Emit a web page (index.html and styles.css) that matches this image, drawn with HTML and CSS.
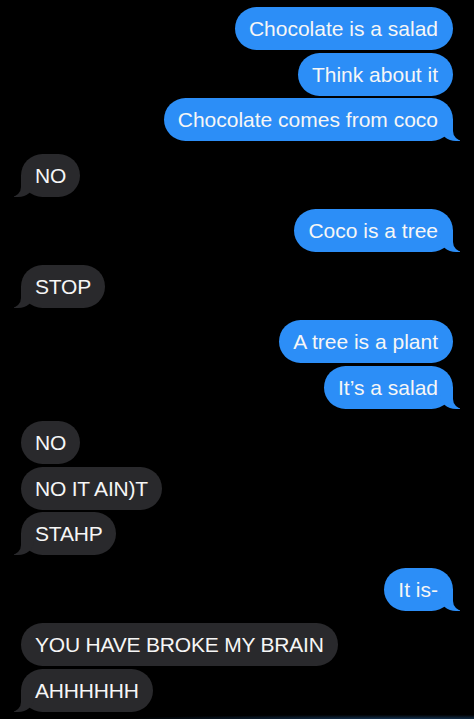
FILE: index.html
```
<!DOCTYPE html>
<html lang="en">
<head>
    <meta charset="UTF-8">
    <meta name="viewport" content="width=device-width, initial-scale=1.0">
    <title>Messages</title>
    <link rel="stylesheet" href="styles.css">
</head>
<body>
    <div class="thread">
        <div class="group">
            <div class="msg sent">Chocolate is a salad</div>
            <div class="msg sent">Think about it</div>
            <div class="msg sent tail">Chocolate comes from coco</div>
        </div>

        <div class="group">
            <div class="msg received tail">NO</div>
        </div>

        <div class="group">
            <div class="msg sent tail">Coco is a tree</div>
        </div>

        <div class="group">
            <div class="msg received tail">STOP</div>
        </div>

        <div class="group">
            <div class="msg sent">A tree is a plant</div>
            <div class="msg sent tail">It’s a salad</div>
        </div>

        <div class="group">
            <div class="msg received">NO</div>
            <div class="msg received">NO IT AIN)T</div>
            <div class="msg received tail">STAHP</div>
        </div>

        <div class="group">
            <div class="msg sent tail">It is-</div>
        </div>

        <div class="group">
            <div class="msg received">YOU HAVE BROKE MY BRAIN</div>
            <div class="msg received tail">AHHHHHH</div>
        </div>

        <div class="input-glow"></div>
    </div>
</body>
</html>
```

FILE: styles.css
```
body {
    margin: 0;
    background-color: #000;
    font-family: "Liberation Sans", Arial, sans-serif;
}
.thread {
    display: flex;
    flex-direction: column;
    gap: 12.5px;
    padding: 7px 21px 0;
}
.group {
    display: flex;
    flex-direction: column;
    gap: 2.5px;
}
.msg {
    position: relative;
    height: 43px;
    line-height: 43px;
    padding: 0 15px 0 14px;
    border-radius: 21.5px;
    font-size: 21px;
    color: #f6f6f6;
    white-space: nowrap;
}
.sent {
    align-self: flex-end;
    background-color: #2c8ef7;
}
.received {
    align-self: flex-start;
    background-color: #29292c;
    padding: 0 14px;
    letter-spacing: -0.2px;
}

/* bubble tails */
.msg.tail::before,
.msg.tail::after {
    content: "";
    position: absolute;
    bottom: 0;
    height: 22px;
}
.sent.tail::before {
    right: -7px;
    width: 20px;
    background-color: #2c8ef7;
    border-bottom-left-radius: 16px 14px;
}
.sent.tail::after {
    right: -10px;
    width: 10px;
    background-color: #000;
    border-bottom-left-radius: 10px;
}
.received.tail::before {
    left: -7px;
    width: 20px;
    background-color: #29292c;
    border-bottom-right-radius: 16px 14px;
}
.received.tail::after {
    left: -10px;
    width: 10px;
    background-color: #000;
    border-bottom-right-radius: 10px;
}

.input-glow {
    height: 6px;
    margin: -11px -21px 0;
    background: radial-gradient(ellipse at 85% 100%, rgba(40, 110, 180, 0.45), rgba(0, 0, 0, 0) 50%);
}
```
